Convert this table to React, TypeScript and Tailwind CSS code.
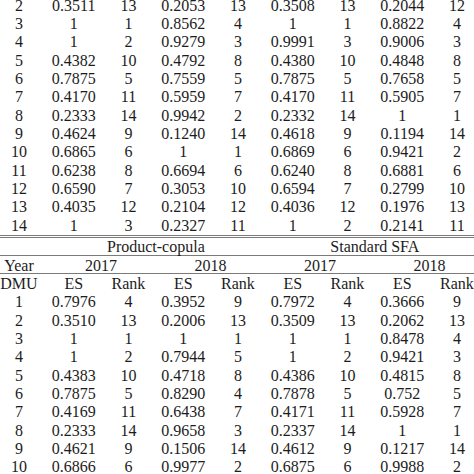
import React from 'react'

type Row = (string | number)[]

// rows of the upper block (row 1 sits above the visible area)
const upper: Row[] = [
  [1, '0.7976', 4, '0.3952', 9, '0.7972', 4, '0.3666', 9],
  [2, '0.3511', 13, '0.2053', 13, '0.3508', 13, '0.2044', 12],
  [3, 1, 1, '0.8562', 4, 1, 1, '0.8822', 4],
  [4, 1, 2, '0.9279', 3, '0.9991', 3, '0.9006', 3],
  [5, '0.4382', 10, '0.4792', 8, '0.4380', 10, '0.4848', 8],
  [6, '0.7875', 5, '0.7559', 5, '0.7875', 5, '0.7658', 5],
  [7, '0.4170', 11, '0.5959', 7, '0.4170', 11, '0.5905', 7],
  [8, '0.2333', 14, '0.9942', 2, '0.2332', 14, 1, 1],
  [9, '0.4624', 9, '0.1240', 14, '0.4618', 9, '0.1194', 14],
  [10, '0.6865', 6, 1, 1, '0.6869', 6, '0.9421', 2],
  [11, '0.6238', 8, '0.6694', 6, '0.6240', 8, '0.6881', 6],
  [12, '0.6590', 7, '0.3053', 10, '0.6594', 7, '0.2799', 10],
  [13, '0.4035', 12, '0.2104', 12, '0.4036', 12, '0.1976', 13],
  [14, 1, 3, '0.2327', 11, 1, 2, '0.2141', 11],
]

const lower: Row[] = [
  [1, '0.7976', 4, '0.3952', 9, '0.7972', 4, '0.3666', 9],
  [2, '0.3510', 13, '0.2006', 13, '0.3509', 13, '0.2062', 13],
  [3, 1, 1, 1, 1, 1, 1, '0.8478', 4],
  [4, 1, 2, '0.7944', 5, 1, 2, '0.9421', 3],
  [5, '0.4383', 10, '0.4718', 8, '0.4386', 10, '0.4815', 8],
  [6, '0.7875', 5, '0.8290', 4, '0.7878', 5, '0.752', 5],
  [7, '0.4169', 11, '0.6438', 7, '0.4171', 11, '0.5928', 7],
  [8, '0.2333', 14, '0.9658', 3, '0.2337', 14, 1, 1],
  [9, '0.4621', 9, '0.1506', 14, '0.4612', 9, '0.1217', 14],
  [10, '0.6866', 6, '0.9977', 2, '0.6875', 6, '0.9988', 2],
  [11, '0.6239', 8, '0.6811', 6, '0.6242', 8, '0.6702', 6],
]

function DataRow({ cells }: { cells: Row }) {
  return (
    <div className="grid grid-cols-[repeat(9,54.75px)] h-[18.33px] text-center">
      {cells.map((c, i) => (
        <div key={i}>{c}</div>
      ))}
    </div>
  )
}

export default function App() {
  return (
    <div className="w-[474px] h-[474px] overflow-hidden bg-white font-['Liberation_Serif',serif] text-[16px] leading-[18.33px] text-[#1c1c1c]">
      <div className="-ml-[8.4px] -mt-[21.5px] w-[492.75px]">
        {upper.map(r => <DataRow key={`u${r[0]}`} cells={r} />)}

        <div className="h-[3px] border-y border-[#7a7a7a]" />

        <div className="grid grid-cols-[repeat(9,54.75px)] h-[17px] text-center leading-[17px]">
          <div />
          <div className="col-span-4">Product-copula</div>
          <div className="col-span-4">Standard SFA</div>
        </div>
        <div className="h-px bg-[#7a7a7a]" />

        <div className="grid grid-cols-[repeat(9,54.75px)] h-[17px] text-center leading-[17px] pt-[1px]">
          <div>Year</div>
          <div className="col-span-2">2017</div>
          <div className="col-span-2">2018</div>
          <div className="col-span-2">2017</div>
          <div className="col-span-2">2018</div>
        </div>
        <div className="h-px bg-[#7a7a7a]" />

        <div className="grid grid-cols-[repeat(9,54.75px)] h-[19.3px] text-center leading-[19px]">
          <div>DMU</div>
          <div>ES</div>
          <div>Rank</div>
          <div>ES</div>
          <div>Rank</div>
          <div>ES</div>
          <div>Rank</div>
          <div>ES</div>
          <div>Rank</div>
        </div>

        {lower.map(r => <DataRow key={`l${r[0]}`} cells={r} />)}
      </div>
    </div>
  )
}
